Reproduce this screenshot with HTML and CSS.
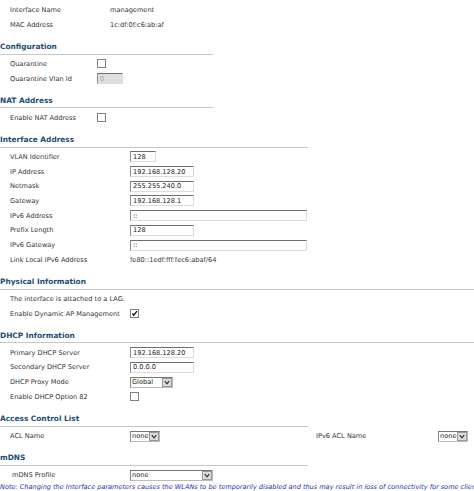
FILE: index.html
```html
<!DOCTYPE html>
<html lang="en">
<head>
    <meta charset="UTF-8">
    <title>Interfaces &gt; Edit</title>
    <link rel="stylesheet" href="styles.css">
</head>
<body>
    <div class="page">
        <!-- General -->
        <div class="rows info">
            <div class="row"><span class="lbl">Interface Name</span><span class="val">management</span></div>
            <div class="row"><span class="lbl">MAC Address</span><span class="val">1c:df:0f:c6:ab:af</span></div>
        </div>

        <div class="sec w-short">
            <h3>Configuration</h3>
            <div class="rows cfg">
                <div class="row"><span class="lbl">Quarantine</span><span class="cb"></span></div>
                <div class="row"><span class="lbl">Quarantine Vlan Id</span><input class="txt txt-s" type="text" value="0" disabled></div>
            </div>
        </div>

        <div class="sec w-short">
            <h3>NAT Address</h3>
            <div class="rows">
                <div class="row"><span class="lbl">Enable NAT Address</span><span class="cb"></span></div>
            </div>
        </div>

        <div class="sec w-mid">
            <h3>Interface Address</h3>
            <div class="rows">
                <div class="row"><span class="lbl">VLAN Identifier</span><input class="txt txt-s" type="text" value="128"></div>
                <div class="row"><span class="lbl">IP Address</span><input class="txt txt-m" type="text" value="192.168.128.20"></div>
                <div class="row"><span class="lbl">Netmask</span><input class="txt txt-m" type="text" value="255.255.240.0"></div>
                <div class="row"><span class="lbl">Gateway</span><input class="txt txt-m" type="text" value="192.168.128.1"></div>
                <div class="row"><span class="lbl">IPv6 Address</span><input class="txt txt-l" type="text" value="::"></div>
                <div class="row"><span class="lbl">Prefix Length</span><input class="txt txt-m" type="text" value="128"></div>
                <div class="row"><span class="lbl">IPv6 Gateway</span><input class="txt txt-l" type="text" value="::"></div>
                <div class="row"><span class="lbl">Link Local IPv6 Address</span><span class="val">fe80::1edf:fff:fec6:abaf/64</span></div>
            </div>
        </div>

        <div class="sec">
            <h3>Physical Information</h3>
            <div class="rows">
                <div class="row"><span class="val">The interface is attached to a LAG.</span></div>
                <div class="row"><span class="lbl">Enable Dynamic AP Management</span><span class="cb"><svg viewBox="0 0 10 10"><path d="M2 5 L4 7.5 L8.5 1.5" fill="none" stroke="#111" stroke-width="1.8"/></svg></span></div>
            </div>
        </div>

        <div class="sec">
            <h3>DHCP Information</h3>
            <div class="rows">
                <div class="row"><span class="lbl">Primary DHCP Server</span><input class="txt txt-m" type="text" value="192.168.128.20"></div>
                <div class="row"><span class="lbl">Secondary DHCP Server</span><input class="txt txt-m" type="text" value="0.0.0.0"></div>
                <div class="row"><span class="lbl">DHCP Proxy Mode</span>
                    <span class="sel sel-global"><span class="sel-val">Global</span><span class="sel-btn"><svg viewBox="0 0 8 8"><path d="M1.5 2.5 L4 5.5 L6.5 2.5" fill="none" stroke="#333" stroke-width="1.4"/></svg></span></span>
                </div>
                <div class="row"><span class="lbl">Enable DHCP Option 82</span><span class="cb"></span></div>
            </div>
        </div>

        <div class="sec w-mid">
            <h3>Access Control List</h3>
            <div class="rows">
                <div class="row"><span class="lbl">ACL Name</span>
                    <span class="sel sel-none"><span class="sel-val">none</span><span class="sel-btn"><svg viewBox="0 0 8 8"><path d="M1.5 2.5 L4 5.5 L6.5 2.5" fill="none" stroke="#333" stroke-width="1.4"/></svg></span></span>
                    <span class="lbl lbl-2">IPv6 ACL Name</span>
                    <span class="sel sel-none"><span class="sel-val">none</span><span class="sel-btn"><svg viewBox="0 0 8 8"><path d="M1.5 2.5 L4 5.5 L6.5 2.5" fill="none" stroke="#333" stroke-width="1.4"/></svg></span></span>
                </div>
            </div>
        </div>

        <div class="sec w-mid">
            <h3>mDNS</h3>
            <div class="rows">
                <div class="row"><span class="lbl lbl-in">mDNS Profile</span>
                    <span class="sel sel-wide"><span class="sel-val">none</span><span class="sel-btn"><svg viewBox="0 0 8 8"><path d="M1.5 2.5 L4 5.5 L6.5 2.5" fill="none" stroke="#333" stroke-width="1.4"/></svg></span></span>
                </div>
            </div>
        </div>

        <p class="note">Note: Changing the Interface parameters causes the WLANs to be temporarily disabled and thus may result in loss of connectivity for some clients.</p>
    </div>
</body>
</html>
```
FILE: styles.css
```css
/* General */
html {
    overflow: hidden;
}

body {
    margin: 0;
    background: #fff;
    font-family: "DejaVu Sans", Verdana, sans-serif;
    font-size: 6.6px;
    color: #333;
}

.page {
    padding-top: 2.65px;
}

/* Sections */
.sec {
    margin-top: 9px;
}

.sec h3 {
    margin: 0 0 2px;
    height: 12px;
    line-height: 12px;
    padding-bottom: 0.5px;
    border-bottom: 1px solid #c6c6c6;
    font-size: 7.4px;
    font-weight: bold;
    color: #1d4c74;
    white-space: nowrap;
}

.w-short h3 {
    width: 213px;
}

.w-mid h3 {
    width: 308px;
}

/* Rows */
.row {
    display: flex;
    align-items: center;
    height: 14.7px;
    padding-left: 10px;
    white-space: nowrap;
}

.lbl {
    width: 120px;
    flex: none;
}

.info .lbl {
    width: 100px;
}

.cfg .lbl,
.w-short .lbl {
    width: 87px;
}

.lbl-in {
    padding-left: 2px;
    width: 118px;
}

.lbl-2 {
    margin-left: 156px;
    width: 122px;
}

/* Controls */
.txt {
    box-sizing: border-box;
    height: 11px;
    margin: 0;
    padding: 0 0 0 2px;
    font-family: inherit;
    font-size: 6.6px;
    color: #222;
    background: #fff;
    border: 1px solid #dcdcdc;
    border-top: 1px solid #6e6e6e;
    border-left: 1px solid #8a8a8a;
    outline: none;
}

.txt:disabled {
    background: #dedede;
    color: #aaa;
}

.txt-s {
    width: 26px;
}

.txt-m {
    width: 64px;
}

.txt-l {
    width: 177px;
}

.cb {
    box-sizing: border-box;
    display: inline-block;
    width: 9px;
    height: 9px;
    border: 1px solid #808080;
    background: #fff;
}

.cb svg {
    display: block;
    width: 7px;
    height: 7px;
}

.sel {
    box-sizing: border-box;
    display: inline-flex;
    height: 11px;
    border: 1px solid #bbb;
    border-top-color: #777;
    border-left-color: #888;
    background: #fff;
    color: #222;
}

.sel-val {
    flex: 1;
    padding-left: 1px;
    line-height: 9px;
    overflow: hidden;
}

.sel-btn {
    box-sizing: border-box;
    width: 10px;
    height: 9px;
    background: #dcdcdc;
    border: 1px solid #999;
}

.sel-btn svg {
    display: block;
    width: 8px;
    height: 7px;
}

.sel-global {
    width: 43px;
}

.sel-none {
    width: 30px;
}

.sel-wide {
    width: 83px;
}

/* Note */
.note {
    margin: 0;
    line-height: 9.5px;
    font-size: 6.55px;
    font-style: italic;
    color: #2630b0;
    white-space: nowrap;
}
```
